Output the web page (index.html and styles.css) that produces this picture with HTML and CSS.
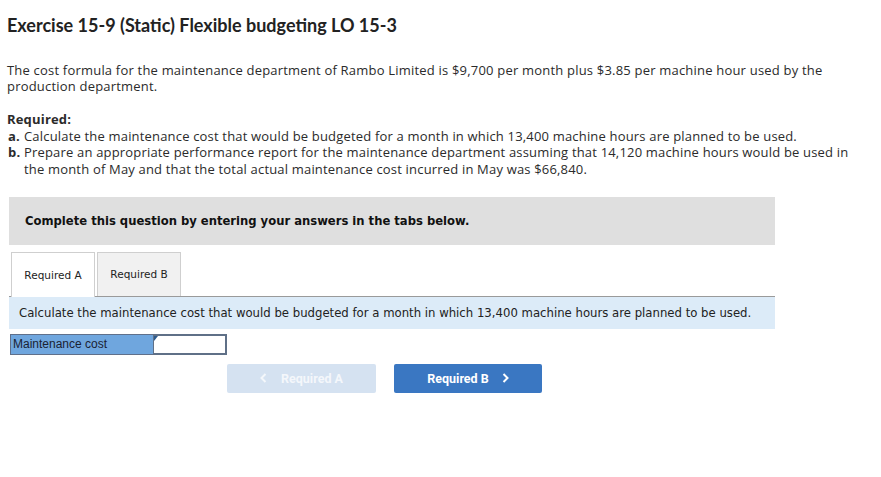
FILE: index.html
```html
<!DOCTYPE html>
<html>
<head>
<meta charset="utf-8">
<link rel="stylesheet" href="styles.css">
</head>
<body>
<div class="page">
  <h1 class="title">Exercise 15-9 (Static) Flexible budgeting LO 15-3</h1>
  <p class="intro">The cost formula for the maintenance department of Rambo Limited is $9,700 per month plus $3.85 per machine hour used by the production department.</p>
  <div class="required">
    <div class="req-head">Required:</div>
    <div class="req-item"><b>a.</b><span>Calculate the maintenance cost that would be budgeted for a month in which 13,400 machine hours are planned to be used.</span></div>
    <div class="req-item"><b>b.</b><span>Prepare an appropriate performance report for the maintenance department assuming that 14,120 machine hours would be used in the month of May and that the total actual maintenance cost incurred in May was $66,840.</span></div>
  </div>
  <div class="notice">Complete this question by entering your answers in the tabs below.</div>
  <div class="tabs">
    <div class="tab active">Required A</div>
    <div class="tab">Required B</div>
  </div>
  <div class="panel">Calculate the maintenance cost that would be budgeted for a month in which 13,400 machine hours are planned to be used.</div>
  <div class="answer-row">
    <div class="label-cell">Maintenance cost</div>
    <div class="input-cell"><span class="flag"></span></div>
  </div>
  <div class="nav">
    <button class="btn disabled"><svg class="chev left" width="7" height="10" viewBox="0 0 7 10"><polyline points="5.5,1 1.5,5 5.5,9" fill="none" stroke="currentColor" stroke-width="2"/></svg>Required A</button>
    <button class="btn primary">Required B<svg class="chev right" width="7" height="10" viewBox="0 0 7 10"><polyline points="1.5,1 5.5,5 1.5,9" fill="none" stroke="currentColor" stroke-width="2"/></svg></button>
  </div>
</div>
</body>
</html>
```
FILE: styles.css
```css
* { box-sizing: border-box; }
body {
  margin: 0;
  background: #fff;
  font-family: "Open Sans", Lato, sans-serif;
  color: #2b2b2b;
}
.page {
  padding: 14px 0 0 0;
}
.title {
  margin: 0 0 0 7px;
  font-family: Lato, sans-serif;
  font-size: 18px;
  font-weight: 700;
  line-height: 22px;
  color: #222;
}
.intro {
  margin: 26px 40px 0 7px;
  font-size: 13px;
  letter-spacing: 0.2px;
  line-height: 16px;
}
.required {
  margin: 17px 20px 0 7px;
  font-size: 13px;
  letter-spacing: 0.18px;
  line-height: 16.7px;
}
.req-head { font-weight: 700; }
.req-item {
  display: flex;
}
.req-item b {
  flex: 0 0 17px;
  padding-left: 1px;
}
.notice {
  margin: 19px 0 0 9px;
  width: 766px;
  height: 48px;
  background: #dfdfdf;
  font-family: "DejaVu Sans", Verdana, sans-serif;
  font-weight: 700;
  font-size: 11.6px;
  color: #111;
  padding: 0 0 0 16px;
  display: flex;
  align-items: center;
}
.tabs {
  display: flex;
  gap: 2px;
  margin: 7px 0 0 11px;
  height: 44px;
  position: relative;
  z-index: 1;
}
.tab {
  width: 84px;
  border: 1px solid #cfcfcf;
  border-bottom: none;
  background: #f1f1f1;
  font-family: "DejaVu Sans", Verdana, sans-serif;
  font-size: 10.5px;
  color: #222;
  display: flex;
  align-items: center;
  justify-content: center;
}
.tab.active {
  background: #fff;
  height: 45px;
}
.panel {
  margin: 0 0 0 9px;
  width: 766px;
  height: 33px;
  background: #dcebf8;
  border-top: 1px solid #9a9a9a;
  font-family: "DejaVu Sans", Verdana, sans-serif;
  font-size: 11.7px;
  color: #222;
  padding-left: 10px;
  display: flex;
  align-items: center;
}
.answer-row {
  display: flex;
  margin: 5px 0 0 10px;
  height: 21px;
}
.label-cell {
  width: 143px;
  background: #6fa6de;
  border: 1px solid #60708a;
  border-right: none;
  font-family: "Liberation Sans", Arial, sans-serif;
  font-size: 12px;
  color: #1a2233;
  padding-left: 2px;
  display: flex;
  align-items: center;
}
.input-cell {
  width: 74px;
  background: #fff;
  border: 2px solid #5f7087;
  border-left: 1px solid #5f7087;
  position: relative;
}
.flag {
  position: absolute;
  left: 0;
  top: 0;
  width: 0;
  height: 0;
  border-top: 5px solid #2c5a8c;
  border-right: 4px solid transparent;
}
.nav {
  display: flex;
  gap: 18px;
  margin: 9px 0 0 227px;
}
.btn {
  width: 149px;
  height: 29px;
  border: none;
  border-radius: 2px;
  font-family: Roboto, "Liberation Sans", sans-serif;
  font-weight: 700;
  font-size: 12.5px;
  color: #fff;
  display: flex;
  align-items: center;
  justify-content: center;
  padding: 0;
}
.btn.disabled {
  background: #d5e2f1;
  color: #f4f7fb;
}
.btn.primary {
  background: #3a77c2;
  width: 148px;
}
.chev.left {
  margin-right: 14px;
}
.chev.right {
  margin-left: 13px;
}
```
